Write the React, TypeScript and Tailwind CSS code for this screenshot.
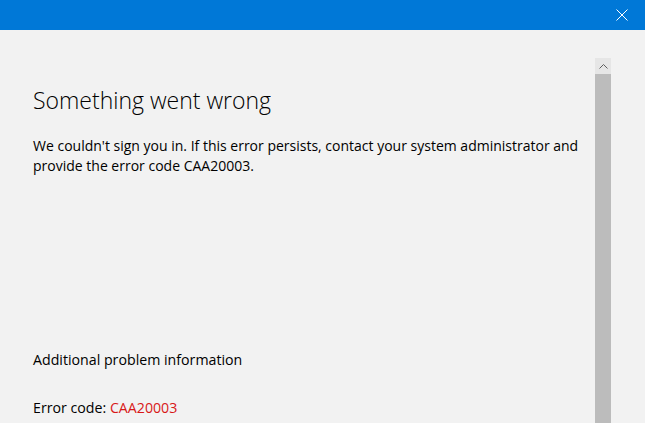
export default function App() {
  return (
    <div className="w-[645px] h-[423px] overflow-hidden bg-[#f2f2f2] flex flex-col" style={{ fontFamily: '"Open Sans", "Liberation Sans", sans-serif' }}>
      <div className="h-[30px] bg-[#0078d7] flex justify-end items-center shrink-0">
        <button className="w-[46px] h-[30px] flex items-center justify-center">
          <svg width="12" height="12" viewBox="0 0 12 12">
            <path d="M0.5 0.5 L11.5 11.5 M11.5 0.5 L0.5 11.5" stroke="#ffffff" strokeWidth="1" />
          </svg>
        </button>
      </div>
      <div className="flex flex-1 min-h-0">
        <div className="flex-1 pl-[33px] pt-[55px] text-[#000000]">
          <h1 className="text-[23px] font-light leading-[30px]">Something went wrong</h1>
          <p className="mt-[21px] text-[14px] leading-[20px] w-[555px]">
            We couldn't sign you in. If this error persists, contact your system administrator and provide the error code CAA20003.
          </p>
          <p className="mt-[174px] text-[14.2px] leading-[20px]">Additional problem information</p>
          <p className="mt-[28px] text-[14.2px] leading-[20px]">
            Error code: <span className="text-[#d81818]">CAA20003</span>
          </p>
        </div>
        <div className="w-[16px] mr-[34px] mt-[28px] flex flex-col">
          <div className="h-[16px] bg-[#e6e6e6] flex items-center justify-center">
            <svg width="9" height="5" viewBox="0 0 9 5">
              <path d="M0.5 4.5 L4.5 0.5 L8.5 4.5" stroke="#606060" strokeWidth="1" fill="none" />
            </svg>
          </div>
          <div className="flex-1 bg-[#bcbcbc]" />
        </div>
      </div>
    </div>
  );
}
